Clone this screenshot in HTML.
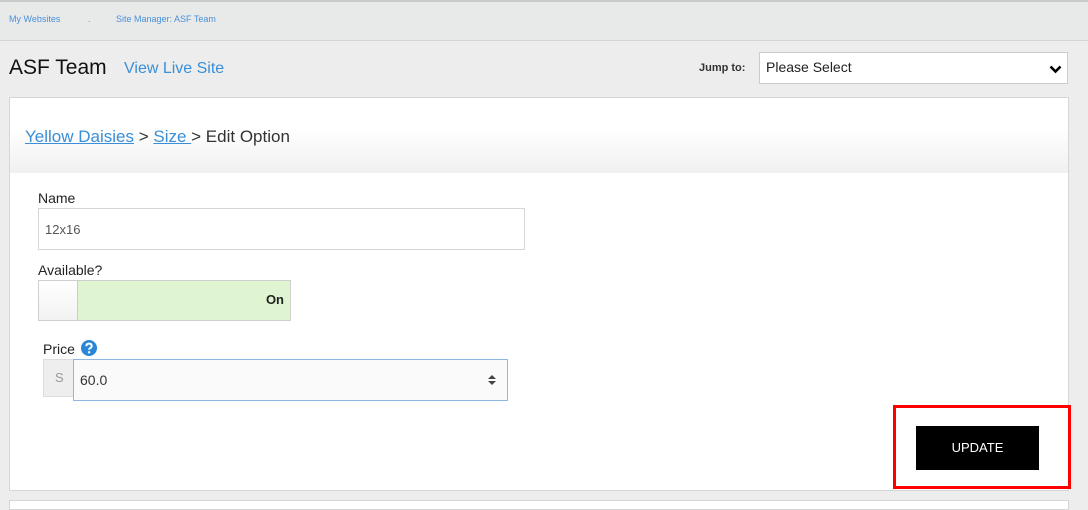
<!DOCTYPE html>
<html><head><meta charset="utf-8"><style>
*{margin:0;padding:0;box-sizing:border-box}
body{width:1088px;height:504px;background:#ecedec;font-family:"Liberation Sans",sans-serif;position:relative;overflow:hidden;color:#222}
.a{position:absolute}
</style></head><body>
<div class="a" style="left:0;top:0;width:1088px;height:2px;background:#c9caca"></div>
<div class="a" style="left:0;top:2px;width:1088px;height:39px;background:#e8e9e9;border-bottom:1px solid #d4d5d5"></div>
<div class="a" style="left:9px;top:14px;font-size:9px;color:#4a90d9">My Websites</div>
<div class="a" style="left:88px;top:14px;font-size:9px;color:#888">.</div>
<div class="a" style="left:116px;top:14px;font-size:9px;color:#4a90d9">Site Manager: ASF Team</div>
<div class="a" style="left:9px;top:56px;font-size:21px;color:#111">ASF Team</div>
<div class="a" style="left:124px;top:60px;font-size:16px;color:#3a8fd8">View Live Site</div>
<div class="a" style="left:699px;top:62px;font-size:11px;font-weight:bold;color:#333">Jump to:</div>
<div class="a" style="left:759px;top:52px;width:309px;height:32px;background:#fff;border:1px solid #ccc;font-size:14px;color:#222;padding:6px 0 0 6px">Please Select
<svg class="a" style="left:289px;top:11px" width="13" height="10" viewBox="0 0 13 10"><path d="M1.5 2.5 L6.5 7.5 L11.5 2.5" stroke="#000" stroke-width="2.6" fill="none"/></svg></div>
<div class="a" style="left:9px;top:97px;width:1060px;height:394px;background:#fff;border:1px solid #d6d6d6"></div>
<div class="a" style="left:10px;top:98px;width:1058px;height:75px;background:linear-gradient(#fff 40%,#f0f0f0)"></div>
<div class="a" style="left:25px;top:127px;font-size:17px;color:#333"><span style="color:#3a8fd8;text-decoration:underline">Yellow Daisies</span> &gt; <span style="color:#3a8fd8;text-decoration:underline">Size </span> &gt; Edit Option</div>
<div class="a" style="left:38px;top:190px;font-size:14px;color:#222">Name</div>
<div class="a" style="left:38px;top:208px;width:487px;height:42px;border:1px solid #d6d6d6;font-size:13px;color:#555;padding:13px 0 0 6px">12x16</div>
<div class="a" style="left:38px;top:262px;font-size:14px;color:#222">Available?</div>
<div class="a" style="left:38px;top:280px;width:253px;height:41px;border:1px solid #cfcfcf;background:#dff4d0">
<div class="a" style="left:0;top:0;width:39px;height:39px;background:linear-gradient(#fff,#f2f2f2);border-right:1px solid #ccc"></div>
<div class="a" style="right:6px;top:11px;font-size:13px;font-weight:bold;color:#222">On</div></div>
<div class="a" style="left:43px;top:341px;font-size:14px;color:#222">Price</div>
<svg class="a" style="left:81px;top:340px" width="16" height="16" viewBox="0 0 16 16"><circle cx="8" cy="8" r="8" fill="#2a86d6"/><path d="M5.3 6.2 Q5.3 3.6 8 3.6 Q10.7 3.6 10.7 6 Q10.7 7.4 9 8.2 Q8.1 8.7 8.1 9.8" stroke="#fff" stroke-width="2" fill="none"/><circle cx="8.1" cy="12.3" r="1.2" fill="#fff"/></svg>
<div class="a" style="left:43px;top:359px;width:31px;height:38px;background:#eee;border:1px solid #ddd;font-size:13px;color:#999;padding:10px 0 0 11px">S</div>
<div class="a" style="left:73px;top:359px;width:435px;height:42px;background:#fafafa;border:1px solid #8fb8e6;font-size:14px;color:#333;padding:12px 0 0 6px">60.0
<svg class="a" style="left:412px;top:13px" width="12" height="14" viewBox="0 0 12 14"><path d="M2 6 L6 2 L10 6Z M2 8 L6 12 L10 8Z" fill="#444"/></svg></div>
<div class="a" style="left:893px;top:405px;width:178px;height:84px;border:3px solid #f00"></div>
<div class="a" style="left:916px;top:426px;width:123px;height:44px;background:#000;color:#fff;font-size:13px;text-align:center;line-height:44px">UPDATE</div>
<div class="a" style="left:9px;top:500px;width:1060px;height:10px;background:#fff;border:1px solid #d6d6d6"></div>
</body></html>
